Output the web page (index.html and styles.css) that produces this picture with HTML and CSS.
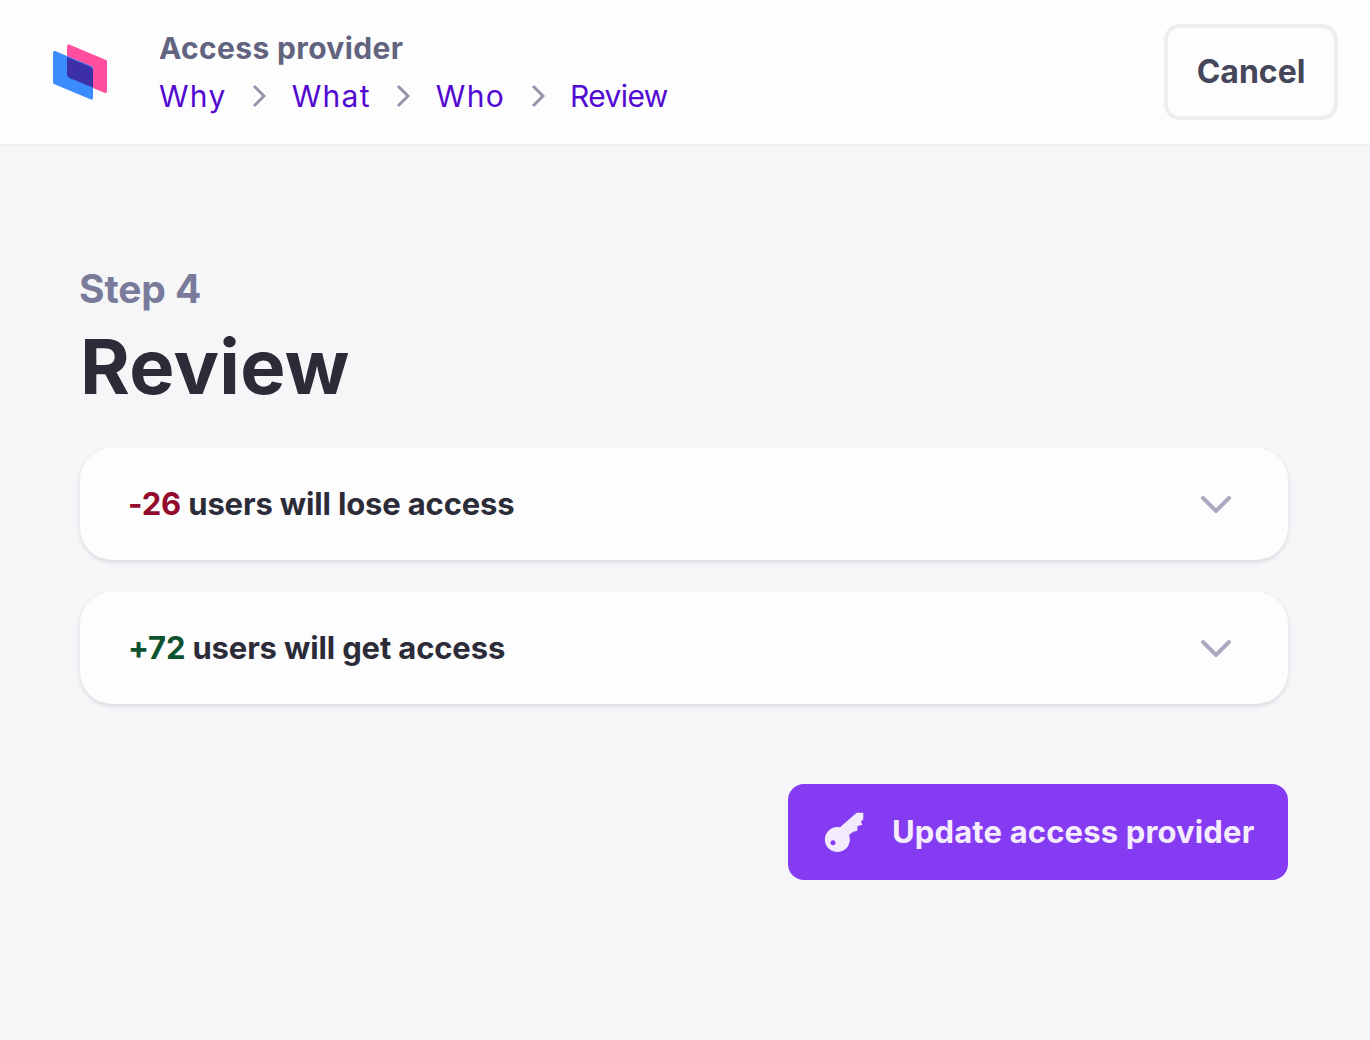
FILE: index.html
```html
<!DOCTYPE html>
<html lang="en">
<head>
    <meta charset="UTF-8">
    <title>Access provider</title>
    <link rel="stylesheet" href="styles.css">
</head>
<body>
    <header class="topbar">
        <svg class="logo" width="54" height="56" viewBox="0 0 54 56">
            <path class="logo-pink" d="M15.5 2 L52.5 17.5 V47.5 L15.5 32 Z"/>
            <path class="logo-blue" d="M1.5 8.5 L38.5 24 V54 L1.5 38.5 Z"/>
            <path class="logo-dark" d="M14 13 L37 22.6 Q40 24 40 27 V43.6 L17 34.3 Q14 33 14 30 Z"/>
        </svg>
        <div class="topbar-text">
            <div class="topbar-title">Access provider</div>
            <nav class="crumbs">
                <a>Why</a>
                <svg class="crumb-sep" width="14" height="24" viewBox="0 0 14 24"><path d="M2 2 L12 12 L2 22"/></svg>
                <a>What</a>
                <svg class="crumb-sep" width="14" height="24" viewBox="0 0 14 24"><path d="M2 2 L12 12 L2 22"/></svg>
                <a>Who</a>
                <svg class="crumb-sep" width="14" height="24" viewBox="0 0 14 24"><path d="M2 2 L12 12 L2 22"/></svg>
                <a class="current">Review</a>
            </nav>
        </div>
        <button class="cancel-btn">Cancel</button>
    </header>

    <main class="content">
        <div class="step-label">Step 4</div>
        <h1>Review</h1>

        <div class="card">
            <span><span class="minus">-26</span> users will lose access</span>
            <svg class="chevron" width="32" height="20" viewBox="0 0 32 20"><path d="M3 3 L16 16 L29 3"/></svg>
        </div>
        <div class="card">
            <span><span class="plus">+72</span> users will get access</span>
            <svg class="chevron" width="32" height="20" viewBox="0 0 32 20"><path d="M3 3 L16 16 L29 3"/></svg>
        </div>

        <div class="actions">
            <button class="submit-btn">
                <svg width="42" height="42" viewBox="0 0 42 42">
                    <path fill-rule="evenodd" d="M16 16.3 L32.7 1.7 H39.3 V8.3 L37 10.7 L38.3 13.7 L33.5 15 L33.3 19.7 L29.3 20.7 L25 24 A12.5 12.5 0 1 1 16 16.3 Z M9 29.2 a2.5 2.5 0 1 0 .01 0 Z"/>
                </svg>
                Update access provider
            </button>
        </div>
    </main>
</body>
</html>
```

FILE: styles.css
```css
* {
    box-sizing: border-box;
}
body {
    margin: 0;
    min-height: 1040px;
    background-color: #f6f6f9;
    font-family: "Inter", "Lato", sans-serif;
    color: #2b2c38;
}
.topbar {
    display: flex;
    align-items: center;
    height: 146px;
    padding: 0 32px 0 53px;
    background-color: #fdfdfe;
    border-bottom: 2px solid #eeeef1;
}
.logo {
    margin-right: 52px;
}
.logo-pink {
    fill: #ff4f9e;
    stroke: #ff4f9e;
    stroke-width: 3;
    stroke-linejoin: round;
}
.logo-blue {
    fill: #3a8cff;
    stroke: #3a8cff;
    stroke-width: 3;
    stroke-linejoin: round;
}
.logo-dark {
    fill: #3d2fa5;
}
.topbar-text {
    flex: 1;
    margin-top: 4px;
}
.topbar-title {
    font-size: 30px;
    line-height: 40px;
    font-weight: 700;
    letter-spacing: 0.35px;
    color: #62637f;
}
.crumbs {
    display: flex;
    align-items: center;
    gap: 25.5px;
    height: 48px;
    margin-top: 4px;
    font-size: 30px;
    letter-spacing: 1.3px;
    color: #5209d1;
}
.crumbs .current {
    letter-spacing: -0.6px;
}
.crumb-sep path {
    fill: none;
    stroke: #9495ad;
    stroke-width: 3;
}
.cancel-btn {
    width: 174px;
    height: 96px;
    padding-bottom: 3px;
    border: 4px solid #eeeef1;
    border-radius: 16px;
    background: transparent;
    font-family: inherit;
    font-size: 32px;
    font-weight: 700;
    color: #45465a;
}
.content {
    padding: 115px 82px 0 80px;
}
.step-label {
    margin-left: -1px;
    font-size: 39px;
    line-height: 56px;
    font-weight: 700;
    letter-spacing: -0.1px;
    color: #7a7b9b;
}
h1 {
    margin: 0 0 33px;
    font-size: 76px;
    line-height: 98px;
    font-weight: 700;
    letter-spacing: 0.3px;
    color: #2b2c38;
}
.card {
    display: flex;
    align-items: center;
    justify-content: space-between;
    height: 112px;
    margin-bottom: 32px;
    padding: 0 56px 2px 48px;
    background-color: #fdfdfe;
    border-radius: 32px;
    box-shadow: 0 2px 4px rgba(43, 44, 56, 0.14);
    font-size: 31px;
    font-weight: 700;
    letter-spacing: -0.15px;
}
.minus {
    color: #930b2c;
}
.plus {
    color: #0e5330;
}
.chevron {
    margin-top: 4px;
}
.chevron path {
    fill: none;
    stroke: #a9aac0;
    stroke-width: 4;
    stroke-linecap: round;
    stroke-linejoin: round;
}
.actions {
    display: flex;
    justify-content: flex-end;
    margin-top: 80px;
}
.submit-btn {
    display: flex;
    align-items: center;
    gap: 26px;
    width: 500px;
    height: 96px;
    padding: 0 0 2px 36px;
    border: none;
    border-radius: 16px;
    background-color: #853bf2;
    font-family: inherit;
    font-size: 31px;
    font-weight: 700;
    letter-spacing: 0.15px;
    color: #f5edfe;
}
.submit-btn svg {
    margin-top: 2px;
    fill: #f3eafe;
}
```
